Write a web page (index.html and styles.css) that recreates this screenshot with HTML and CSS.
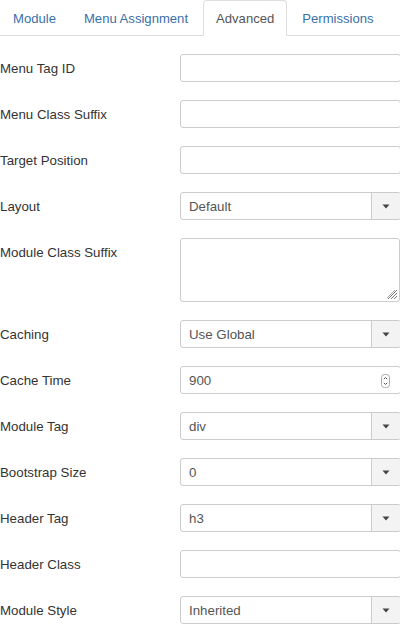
FILE: index.html
```html
<!DOCTYPE html>
<html>
<head>
<meta charset="utf-8">
<link rel="stylesheet" href="styles.css">
</head>
<body>
<ul class="tabs">
  <li class="tab"><a>Module</a></li>
  <li class="tab"><a>Menu Assignment</a></li>
  <li class="tab active"><a>Advanced</a></li>
  <li class="tab"><a>Permissions</a></li>
</ul>
<div class="form">
  <div class="row"><label class="lbl">Menu Tag ID</label><div class="field"><input class="input" type="text"></div></div>
  <div class="row"><label class="lbl">Menu Class Suffix</label><div class="field"><input class="input" type="text"></div></div>
  <div class="row"><label class="lbl">Target Position</label><div class="field"><input class="input" type="text"></div></div>
  <div class="row"><label class="lbl">Layout</label><div class="field"><div class="select"><span class="sel-text">Default</span><span class="sel-btn"><svg width="8" height="5" viewBox="0 0 8 5"><path d="M0.5 0.5h7L4 4.5z" fill="#444"/></svg></span></div></div></div>
  <div class="row"><label class="lbl">Module Class Suffix</label><div class="field"><div class="ta-wrap"><textarea class="textarea"></textarea><svg class="grip" width="12" height="12" viewBox="0 0 12 12"><g stroke="#777" stroke-width="1"><path d="M11 2L2 11"/><path d="M11 5L5 11"/><path d="M11 8L8 11"/><path d="M9 2L1 10" stroke="#aaa"/></g></svg></div></div></div>
  <div class="row"><label class="lbl">Caching</label><div class="field"><div class="select"><span class="sel-text">Use Global</span><span class="sel-btn"><svg width="8" height="5" viewBox="0 0 8 5"><path d="M0.5 0.5h7L4 4.5z" fill="#444"/></svg></span></div></div></div>
  <div class="row"><label class="lbl">Cache Time</label><div class="field"><div class="number"><span class="num-text">900</span><svg class="spin" width="9" height="14" viewBox="0 0 9 14"><rect x="0.5" y="0.5" width="8" height="13" rx="3" fill="#fff" stroke="#aaa"/><path d="M2.8 5.2L4.5 3.5L6.2 5.2M2.8 8.8L4.5 10.5L6.2 8.8" fill="none" stroke="#555" stroke-width="1"/></svg></div></div></div>
  <div class="row"><label class="lbl">Module Tag</label><div class="field"><div class="select"><span class="sel-text">div</span><span class="sel-btn"><svg width="8" height="5" viewBox="0 0 8 5"><path d="M0.5 0.5h7L4 4.5z" fill="#444"/></svg></span></div></div></div>
  <div class="row"><label class="lbl">Bootstrap Size</label><div class="field"><div class="select"><span class="sel-text">0</span><span class="sel-btn"><svg width="8" height="5" viewBox="0 0 8 5"><path d="M0.5 0.5h7L4 4.5z" fill="#444"/></svg></span></div></div></div>
  <div class="row"><label class="lbl">Header Tag</label><div class="field"><div class="select"><span class="sel-text">h3</span><span class="sel-btn"><svg width="8" height="5" viewBox="0 0 8 5"><path d="M0.5 0.5h7L4 4.5z" fill="#444"/></svg></span></div></div></div>
  <div class="row"><label class="lbl">Header Class</label><div class="field"><input class="input" type="text"></div></div>
  <div class="row"><label class="lbl">Module Style</label><div class="field"><div class="select"><span class="sel-text">Inherited</span><span class="sel-btn"><svg width="8" height="5" viewBox="0 0 8 5"><path d="M0.5 0.5h7L4 4.5z" fill="#444"/></svg></span></div></div></div>
</div>
</body>
</html>
```
FILE: styles.css
```css
html, body {
  margin: 0;
  padding: 0;
  background: #fff;
  overflow: hidden;
}
body {
  width: 400px;
  height: 624px;
  font-family: "Liberation Sans", Arial, sans-serif;
  font-size: 13.3px;
  color: #333;
}
.tabs {
  list-style: none;
  margin: 0;
  padding: 0;
  display: flex;
  border-bottom: 1px solid #ddd;
  height: 35px;
  font-size: 13.1px;
}
.tab {
  margin-right: 2px;
  margin-bottom: -1px;
}
.tab a {
  display: block;
  padding: 9px 12px 7px;
  line-height: 18px;
  border: 1px solid transparent;
  border-radius: 4px 4px 0 0;
  color: #3a6fa8;
  white-space: nowrap;
}
.tab.active a {
  color: #555;
  background: #fff;
  border-color: #ddd #ddd transparent;
}
.form {
  padding-top: 18px;
  display: flex;
  flex-direction: column;
  gap: 18px;
}
.row {
  display: flex;
  align-items: flex-start;
}
.lbl {
  width: 180px;
  flex: none;
  padding-top: 6px;
  line-height: 18px;
  color: #333;
}
.field {
  width: 221px;
  flex: none;
}
.input {
  box-sizing: border-box;
  display: block;
  width: 100%;
  height: 28px;
  margin: 0;
  border: 1px solid #ccc;
  border-radius: 3px;
  background: #fff;
  padding: 0 8px;
  font: inherit;
  outline: none;
}
.select {
  box-sizing: border-box;
  height: 28px;
  border: 1px solid #ccc;
  border-radius: 3px;
  display: flex;
  align-items: stretch;
  background: #fff;
  overflow: hidden;
}
.sel-text {
  flex: 1;
  padding-left: 8px;
  line-height: 27px;
  color: #555;
}
.sel-btn {
  width: 28px;
  flex: none;
  border-left: 1px solid #ccc;
  background: #f3f3f3;
  display: flex;
  align-items: center;
  justify-content: center;
}
.ta-wrap {
  position: relative;
  width: 220px;
  height: 64px;
}
.textarea {
  box-sizing: border-box;
  display: block;
  width: 220px;
  height: 64px;
  margin: 0;
  border: 1px solid #ccc;
  border-radius: 3px;
  resize: none;
  font: inherit;
  outline: none;
}
.grip {
  position: absolute;
  right: 2px;
  bottom: 2px;
}
.number {
  box-sizing: border-box;
  height: 28px;
  border: 1px solid #ccc;
  border-radius: 3px;
  display: flex;
  align-items: center;
  padding: 1px 10px 0 8px;
  background: #fff;
}
.num-text {
  flex: 1;
  color: #555;
}
.spin {
  flex: none;
}
```
